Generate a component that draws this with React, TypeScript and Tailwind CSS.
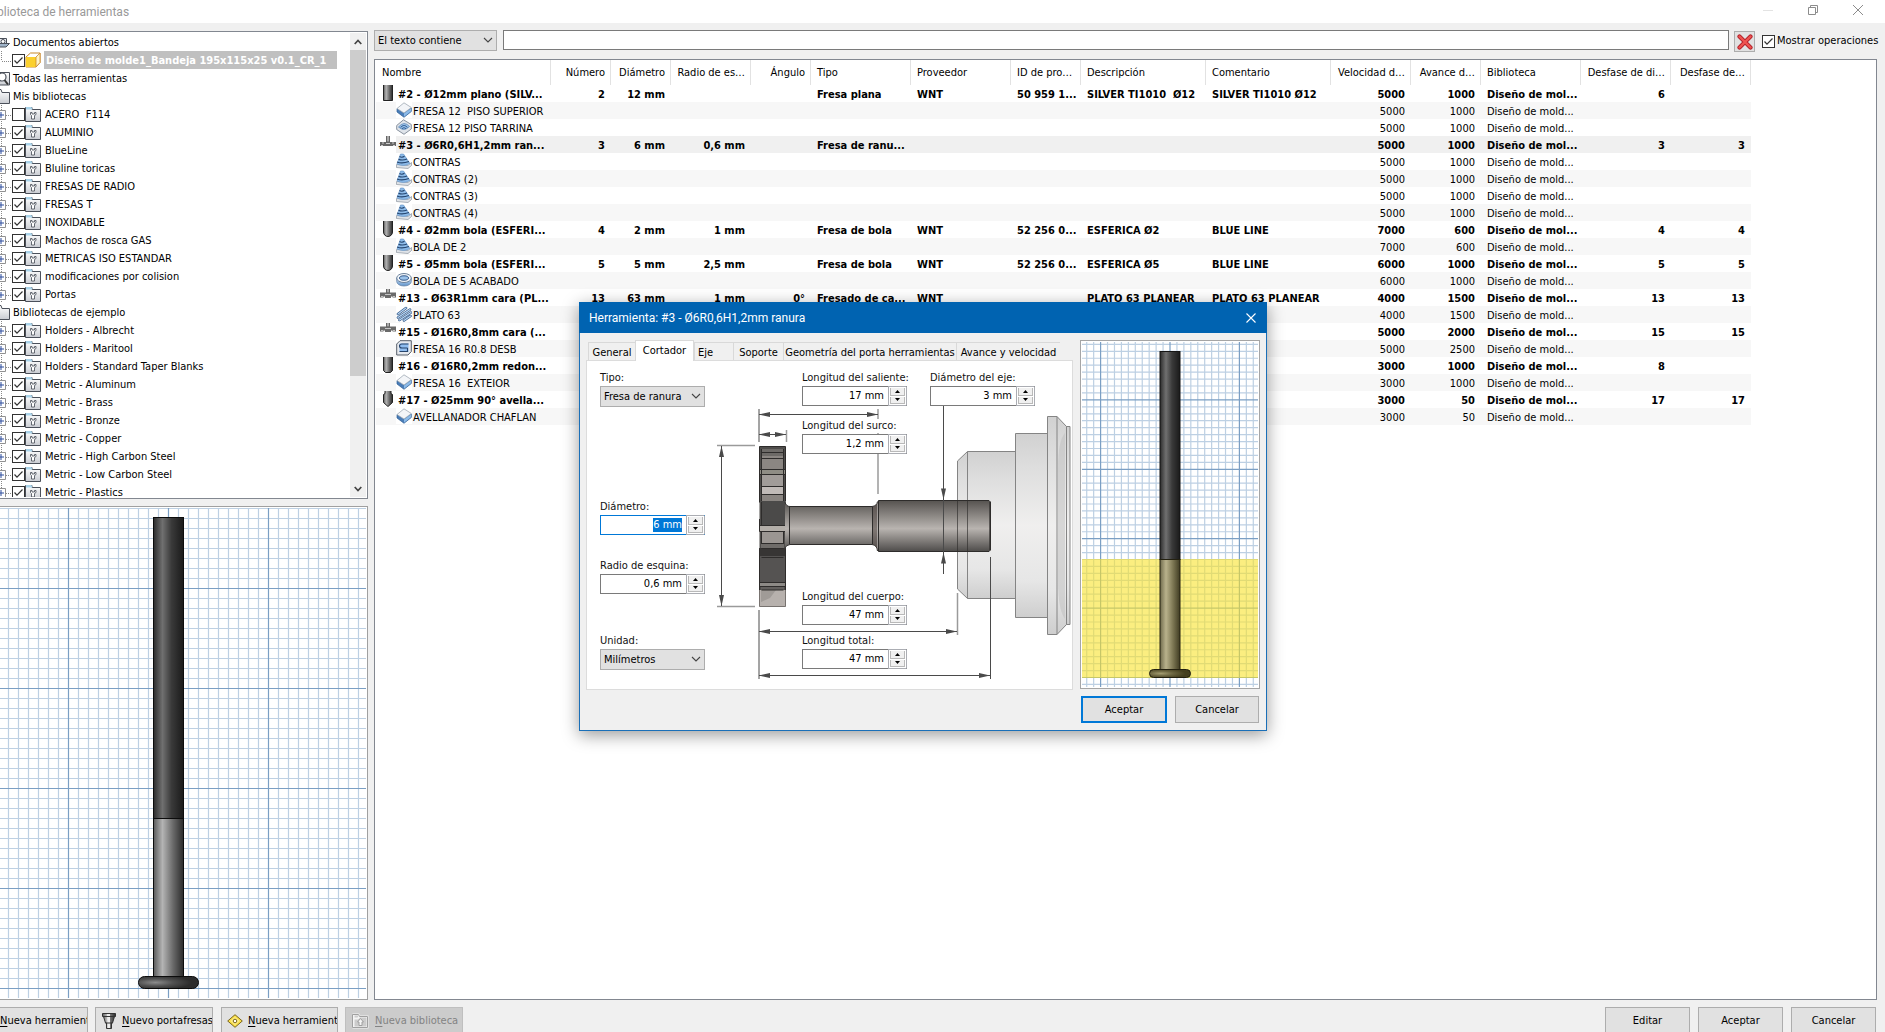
import { useEffect, useRef } from "react";
import type { ReactNode } from "react";

/* ---------- shared controls ---------- */

function CheckBox({ id, label, on = true }: { id: string; label?: string; on?: boolean }) {
  return (
    <span className="relative block h-[13px] w-[13px] shrink-0">
      <input id={id} type="checkbox" defaultChecked={on} aria-label={label}
        className="peer block h-[13px] w-[13px] appearance-none border border-[#333] bg-white" />
      <svg viewBox="0 0 13 13" className="pointer-events-none absolute inset-0 hidden h-[13px] w-[13px] peer-checked:block">
        <path d="M2.500 6.500 L5 9.200 L10.500 3.500" fill="none" stroke="#333" strokeWidth="1.200" />
      </svg>
    </span>
  );
}

function Select({ id, value, label }: { id: string; value: string; label?: string }) {
  return (
    <span className="relative block">
      <select id={id} aria-label={label} defaultValue={value}
        className="block h-[21px] w-full appearance-none border border-[#adadad] bg-[#e1e1e1] pt-px pr-4 pl-[3px] leading-[18px]">
        <option>{value}</option>
      </select>
      <svg viewBox="0 0 10 6" className="pointer-events-none absolute top-[7px] right-1 h-[6px] w-[10px]">
        <path d="M1 1 L5 5 L9 1" fill="none" stroke="#444" strokeWidth="1.100" />
      </svg>
    </span>
  );
}

function Spinner({ id, value, active }: { id: string; value: string; active?: boolean }) {
  const ref = useRef<HTMLInputElement>(null);
  useEffect(() => {
    if (active && ref.current) {
      ref.current.focus();
      ref.current.select();
    }
  }, [active]);
  return (
    <span className={active ? "flex h-5 items-center border border-[#0078d7] border-r-[#abadb3] bg-white" : "flex h-5 items-center border border-[#7a7a7a] border-r-[#abadb3] bg-white"}>
      <input ref={ref} id={id} defaultValue={value}
        className="h-[14px] w-0 min-w-0 flex-1 bg-transparent pr-1 text-right leading-[14px] outline-none selection:bg-[#0078d7] selection:text-white" />
      <span className="flex h-5 w-[18px] flex-col gap-px border border-r-0 border-[#abadb3] bg-white p-px">
        <button type="button" aria-label="Aumentar" className="grid flex-1 place-items-center border border-t-0 border-[#b9b9b9] bg-[#f0f0f0]">
          <svg viewBox="0 0 5 3" className="h-[3px] w-[5px]"><path d="M0 3 L2.500 0 L5 3 Z" /></svg>
        </button>
        <button type="button" aria-label="Disminuir" className="grid flex-1 place-items-center border border-t-0 border-[#b9b9b9] bg-[#f0f0f0]">
          <svg viewBox="0 0 5 3" className="h-[3px] w-[5px]"><path d="M0 0 L2.500 3 L5 0 Z" /></svg>
        </button>
      </span>
    </span>
  );
}

function Field({ id, label, children }: { id: string; label: string; children: ReactNode }) {
  return (
    <div className="flex flex-col gap-px">
      <label htmlFor={id} className="h-4 leading-[18px] whitespace-nowrap text-[#111]">{label}</label>
      {children}
    </div>
  );
}

/* ---------- gradients used by every drawing ---------- */

function Gradients() {
  return (
    <svg className="absolute h-0 w-0" aria-hidden="true">
      <defs>
        <linearGradient id="gDark"><stop offset="0" stopColor="#2c2c2c" /><stop offset="0.3" stopColor="#707070" /><stop offset="0.6" stopColor="#3a3a3a" /><stop offset="1" stopColor="#1a1a1a" /></linearGradient>
        <linearGradient id="gSteel"><stop offset="0" stopColor="#5a5a5a" /><stop offset="0.3" stopColor="#b4b4b4" /><stop offset="0.65" stopColor="#6a6a6a" /><stop offset="1" stopColor="#2b2b2b" /></linearGradient>
        <linearGradient id="gOlive"><stop offset="0" stopColor="#6f6a4c" /><stop offset="0.3" stopColor="#b9b28c" /><stop offset="0.65" stopColor="#7d7753" /><stop offset="1" stopColor="#3f3b22" /></linearGradient>
        <radialGradient id="gHead" cx="0.28" cy="0.5" r="0.6"><stop offset="0" stopColor="#8c8c8c" /><stop offset="0.5" stopColor="#515151" /><stop offset="1" stopColor="#2c2c2c" /></radialGradient>
        <radialGradient id="gHeadOlive" cx="0.28" cy="0.5" r="0.6"><stop offset="0" stopColor="#a39c70" /><stop offset="0.5" stopColor="#6b6540" /><stop offset="1" stopColor="#45401f" /></radialGradient>
        <linearGradient id="gBody" x2="0" y2="1"><stop offset="0" stopColor="#565350" /><stop offset="0.55" stopColor="#b9b4b0" /><stop offset="1" stopColor="#4e4c4a" /></linearGradient>
        <linearGradient id="gHolder" x2="0" y2="1"><stop offset="0" stopColor="#bdbdbd" /><stop offset="0.18" stopColor="#cfcfcf" /><stop offset="0.5" stopColor="#e9e8e7" /><stop offset="0.8" stopColor="#dcdcdc" /><stop offset="1" stopColor="#b9b9b9" /></linearGradient>
        <linearGradient id="gFolder" x2="0" y2="1"><stop offset="0" stopColor="#ffffff" /><stop offset="1" stopColor="#c9ccd2" /></linearGradient>
        <linearGradient id="gBlue" x2="0" y2="1"><stop offset="0" stopColor="#cfe1f5" /><stop offset="1" stopColor="#5f94cc" /></linearGradient>
      </defs>
    </svg>
  );
}

/* ---------- tree ---------- */

function LibraryIcon() {
  return (
    <svg viewBox="0 0 16 16" className="h-4 w-4 shrink-0">
      <path d="M.5 1.500 H7 V3.500 H15.500 V15.500 H.5 Z" fill="url(#gFolder)" stroke="#4b505a" />
      <path d="M1 1 H6.500 L7.500 3.500 H1 Z" fill="#a9d3ea" />
      <path d="M6.500 13 V9.500 L5.500 8.500 V6.500 H7 V8 H9.500 V6.500 H11 V8.500 L9.500 9.500 V13 Z" fill="#fff" stroke="#555a63" strokeWidth=".9" />
    </svg>
  );
}

function FolderIcon() {
  return (
    <svg viewBox="0 0 16 16" className="h-4 w-4 shrink-0">
      <path d="M.5 1.500 H7 L8 4.500 H15.500 V15.500 H.5 Z" fill="url(#gFolder)" stroke="#4b505a" />
    </svg>
  );
}

function TrayIcon() {
  return (
    <svg viewBox="0 0 16 16" className="h-4 w-4 shrink-0">
      <path d="M1 9 V4.500 H12.500 V9" fill="#e8ebf0" stroke="#4b505a" />
      <circle cx="9" cy="7.500" r="2" fill="#fff" stroke="#4b505a" />
      <path d="M0 9.500 H15.500 L12 13 H0 Z" fill="#9fb3c8" stroke="#4b505a" />
    </svg>
  );
}

function SearchAllIcon() {
  return (
    <svg viewBox="0 0 16 16" className="h-4 w-4 shrink-0">
      <path d="M.5 2.500 H15.500 V15 H.5 Z" fill="url(#gFolder)" stroke="#4b505a" />
      <circle cx="8" cy="7" r="4" fill="#fff" stroke="#4b505a" strokeWidth="1.200" />
      <path d="M10.500 10 L14 14.500" stroke="#333" strokeWidth="2" />
    </svg>
  );
}

function CubeIcon() {
  return (
    <svg viewBox="0 0 16 16" className="h-4 w-4 shrink-0">
      <path d="M1 5 L5.500 1 H15 V10.500 L11 15 H1 Z" fill="#fff" stroke="#c9892b" strokeLinejoin="round" />
      <path d="M1 5 H11 V15 H1 Z" fill="#fbd02d" />
      <path d="M11 5 L15 1 V10.500 L11 15 Z" fill="#fff4c6" stroke="#c9892b" strokeWidth=".8" />
    </svg>
  );
}

const myLibs = ["ACERO  F114", "ALUMINIO", "BlueLine", "Bluline toricas", "FRESAS DE RADIO", "FRESAS T", "INOXIDABLE", "Machos de rosca GAS", "METRICAS ISO ESTANDAR", "modificaciones por colision", "Portas"];
const sampleLibs = ["Holders - Albrecht", "Holders - Maritool", "Holders - Standard Taper Blanks", "Metric - Aluminum", "Metric - Brass", "Metric - Bronze", "Metric - Copper", "Metric - High Carbon Steel", "Metric - Low Carbon Steel", "Metric - Plastics"];

function RootNode({ icon, children }: { icon: ReactNode; children: string }) {
  return (
    <li className="flex h-[18px] items-center gap-[3px] whitespace-nowrap">{icon}<span className="h-[18px] leading-[20px]">{children}</span></li>
  );
}

function LibNode({ name, id }: { name: string; id: string }) {
  return (
    <li className="flex h-[18px] items-center whitespace-nowrap">
      <svg viewBox="0 0 18 18" className="h-[18px] w-[18px] shrink-0">
        <path d="M7.500 0 V18 M12 10.500 H18" stroke="#888" strokeDasharray="1 1" />
        <path d="M2.500 5.500 H11.500 V14.500 H2.500 Z" fill="#fff" stroke="#919191" />
        <path d="M4 10 H10 M7 7 V13" stroke="#2b4a9b" />
      </svg>
      <CheckBox id={id} label={name} on={!name.startsWith("ACERO")} />
      <LibraryIcon />
      <label htmlFor={id} className="h-[18px] pl-1 leading-[20px] whitespace-pre">{name}</label>
    </li>
  );
}

function Tree() {
  return (
    <div className="flex h-[468px] shrink-0 border border-[#828790] bg-white p-px">
      <ul className="min-w-0 flex-1 overflow-hidden">
        <RootNode icon={<TrayIcon />}>Documentos abiertos</RootNode>
        <li className="flex h-[18px] items-center whitespace-nowrap">
          <svg viewBox="0 0 18 18" className="h-[18px] w-[18px] shrink-0"><path d="M7.500 0 V10 M8 10.500 H18" fill="none" stroke="#888" strokeDasharray="1 1" /></svg>
          <CheckBox id="doc" label="Diseño de molde1" />
          <CubeIcon />
          <label htmlFor="doc" className="ml-[3px] h-[18px] w-[293px] bg-[#c0c0c0] pl-[2px] leading-[20px] font-bold text-white">Diseño de molde1_Bandeja 195x115x25 v0.1_CR_1</label>
        </li>
        <RootNode icon={<SearchAllIcon />}>Todas las herramientas</RootNode>
        <RootNode icon={<FolderIcon />}>Mis bibliotecas</RootNode>
        {myLibs.map((n, i) => <LibNode key={n} name={n} id={"my" + i} />)}
        <RootNode icon={<FolderIcon />}>Bibliotecas de ejemplo</RootNode>
        {sampleLibs.map((n, i) => <LibNode key={n} name={n} id={"sample" + i} />)}
      </ul>
      <div className="flex w-4 flex-col bg-[#f0f0f0]">
        <button type="button" aria-label="Subir" className="grid h-[17px] place-items-center">
          <svg viewBox="0 0 8 6" className="h-[6px] w-2"><path d="M.7 5 L4 1.500 L7.300 5" fill="none" stroke="#444" strokeWidth="1.700" /></svg>
        </button>
        <div className="h-[326px] bg-[#cdcdcd]" />
        <div className="flex-1" />
        <button type="button" aria-label="Bajar" className="grid h-[17px] place-items-center">
          <svg viewBox="0 0 8 6" className="h-[6px] w-2"><path d="M.7 1 L4 4.500 L7.300 1" fill="none" stroke="#444" strokeWidth="1.700" /></svg>
        </button>
      </div>
    </div>
  );
}

/* ---------- tool previews ---------- */

function Grid({ x0, x1, y0, y1, ox, oy, step }: { x0: number; x1: number; y0: number; y1: number; ox: number; oy: number; step: number }) {
  let minor = "";
  let major = "";
  for (let k = Math.ceil((x0 - ox) / step); ox + k * step < x1; k++) {
    const d = `M${ox + k * step} ${y0}V${y1}`;
    if (k % 10 === 0) major += d; else minor += d;
  }
  for (let k = Math.ceil((y0 - oy) / step); oy + k * step < y1; k++) {
    const d = `M${x0} ${oy + k * step}H${x1}`;
    if (k % 10 === 0) major += d; else minor += d;
  }
  return (
    <g fill="none">
      <path d={minor} stroke="#bdd0e3" strokeWidth="1.200" />
      <path d={major} stroke="#7b9fc4" strokeWidth="1.200" />
    </g>
  );
}

function LibraryPreview() {
  return (
    <div className="min-h-0 flex-1 border border-[#a0a0a0] bg-white">
      <svg viewBox="-7 507 374 492" preserveAspectRatio="xMaxYMax slice" className="block h-full w-full">
        <Grid x0={-7} x1={366} y0={508} y1={998} ox={168.5} oy={988.5} step={10} />
        <rect x="153.500" y="517.500" width="30" height="301" fill="url(#gDark)" stroke="#0c0c0c" />
        <rect x="153.500" y="818.500" width="30" height="158" fill="url(#gSteel)" stroke="#0c0c0c" />
        <rect x="138.500" y="976.500" width="60" height="12" rx="6" fill="url(#gHead)" stroke="#0c0c0c" />
      </svg>
    </div>
  );
}

function ToolPreview() {
  return (
    <div className="h-[349px] border border-[#a5a5a5] bg-white">
      <svg viewBox="1081 341 178 347" className="block h-full w-full">
        <Grid x0={1082} x1={1258} y0={342} y1={687} ox={1170} oy={677.5} step={6.94} />
        <rect x="1082" y="559" width="176" height="119" fill="#f8e32c" fillOpacity=".6" />
        <rect x="1160" y="351.500" width="20" height="208" fill="url(#gDark)" stroke="#151515" />
        <rect x="1160" y="559.500" width="20" height="110" fill="url(#gOlive)" stroke="#242110" />
        <rect x="1149.500" y="669.500" width="41" height="8" rx="4" fill="url(#gHeadOlive)" stroke="#242110" />
      </svg>
    </div>
  );
}

/* ---------- table ---------- */

type Icon = "flat" | "slot" | "ball" | "face" | "bull" | "chamfer" | "contour2d" | "pocket" | "cone" | "ring" | "parallel" | "facing";

function RowIcon({ kind }: { kind: Icon }) {
  return (
    <svg viewBox="0 0 16 16" className="h-4 w-4 shrink-0 bg-white">
      {kind === "flat" && <path d="M3.500 0 V15.500 H12.500 V0" fill="url(#gSteel)" stroke="#222" />}
      {kind === "bull" && <path d="M3.500 0 V13.500 L5.500 15.500 H10.500 L12.500 13.500 V0" fill="url(#gSteel)" stroke="#222" />}
      {kind === "ball" && <path d="M3.500 0 V11 A4.500 4.500 0 0 0 12.500 11 V0" fill="url(#gSteel)" stroke="#222" />}
      {kind === "chamfer" && <path d="M5 0 V2.500 L3.500 3.500 V11.500 L8 15.500 L12.500 11.500 V3.500 L11 2.500 V0" fill="url(#gSteel)" stroke="#222" />}
      {kind === "slot" && (
        <g>
          <path d="M6.500 0 V6 H9.500 V0" fill="#aaa" stroke="#666" />
          <path d="M0 6 H16 V10 H0 Z" fill="#666" />
          <path d="M2 7 H4 M6 7.500 H10 M12 7 H14 M1 9.500 H3 M13 9.500 H15" stroke="#ccc" />
        </g>
      )}
      {kind === "face" && (
        <g>
          <path d="M6.500 0 V4 H9.500 V0" fill="#aaa" stroke="#666" />
          <path d="M0 3.500 H16 V8.500 H12.500 V7.500 H11 V9 H5 V7.500 H3.500 V8.500 H0 Z" fill="#6b6b6b" />
          <path d="M5 5.500 H11 M1 7.500 H3 M13 7.500 H15" stroke="#c4c4c4" />
        </g>
      )}
      {kind === "contour2d" && (
        <g strokeLinejoin="round">
          <path d="M1 6.500 L8 11 L15.300 6 V9.500 L8 15.300 L1 10 Z" fill="#4a7db8" stroke="#2d5c92" strokeWidth=".7" />
          <path d="M1 6.500 L8 .8 L15.300 5.500 L8 11 Z" fill="#f3f5f8" stroke="#a0a9b4" strokeWidth=".8" />
          <path d="M8 11.500 L15 6.500 V9.300 L8 14.800 Z" fill="#8dbbe8" />
        </g>
      )}
      {kind === "pocket" && (
        <g strokeLinejoin="round">
          <path d="M.7 6.500 L7.500 .8 L15.300 5.500 V10 L8 15.300 L.7 10.500 Z" fill="#dfe4ea" stroke="#7d8794" strokeWidth=".9" />
          <path d="M2.500 8 Q8 1.500 13.500 7.500 Q8 13 2.500 8 Z" fill="#a9cdf0" stroke="#5682b3" strokeWidth=".8" />
          <path d="M4.500 8.500 Q8 4.500 11.500 8.500 M6 10 Q8 7.500 10 10" fill="none" stroke="#2f5f98" strokeWidth="1.100" />
        </g>
      )}
      {kind === "cone" && (
        <g>
          <path d="M.5 11.500 L12 12.500 L15.500 9.500 V12.500 L12 15.500 L.5 14.500 Z" fill="#dfe3e8" stroke="#8b939d" strokeWidth=".7" />
          <path d="M4.500 1 H7.500 L14 10.500 Q8 14 1 11 Z" fill="#8dbbe9" stroke="#5d8fc5" strokeWidth=".6" />
          <path d="M3.500 3.500 Q6 5 8.500 3.300 M2.500 6.200 Q6 8 11 6 M1 9 Q6 11 13 8.500" fill="none" stroke="#24456f" strokeWidth="1.100" />
        </g>
      )}
      {kind === "ring" && (
        <g>
          <path d="M.7 6 V9.500 A7.300 4.500 0 0 0 15.300 9.500 V6 Z" fill="url(#gBlue)" stroke="#6b87a8" strokeWidth=".8" />
          <ellipse cx="8" cy="6" rx="7.300" ry="4.500" fill="#f1f5fa" stroke="#5f7690" strokeWidth=".9" />
          <ellipse cx="8" cy="6" rx="4.500" ry="2.200" fill="#9cc3ea" stroke="#35598a" />
        </g>
      )}
      {kind === "parallel" && (
        <g fill="none" strokeLinecap="round">
          <path d="M2 8 L10 2 M2 11.500 L14 3.500 M3.500 14 L15 6.500 M8 14.500 L14.500 10" stroke="#2f5585" strokeWidth="2.600" />
          <path d="M2 8 L10 2 M2 11.500 L14 3.500 M3.500 14 L15 6.500 M8 14.500 L14.500 10" stroke="#b9d6f3" strokeWidth="1.300" />
        </g>
      )}
      {kind === "facing" && (
        <g strokeLinejoin="round">
          <path d="M.7 4 L4 .7 H15.300 V11.500 L12 15 H.7 Z" fill="#e6e9ee" stroke="#555d68" />
          <rect x="3.500" y="3.500" width="9" height="8.500" fill="#8fbdf0" />
          <path d="M12.500 4 H6 Q3.500 4 3.500 6 Q3.500 8 6 8 H11.500 M11.500 8 V11.500 H3.500" fill="none" stroke="#27446b" strokeWidth="1.100" />
        </g>
      )}
    </svg>
  );
}

type Row = { tool: boolean; icon: Icon; c: string[] };
const T = (icon: Icon, name: string, n: string, d: string, r: string, a: string, tipo: string, prov: string, id: string, desc: string, com: string, v: string, f: string, o1: string, o2: string): Row =>
  ({ tool: true, icon, c: [name, n, d, r, a, tipo, prov, id, desc, com, v, f, "Diseño de mol...", o1, o2] });
const O = (icon: Icon, name: string, v: string, f: string): Row =>
  ({ tool: false, icon, c: [name, "", "", "", "", "", "", "", "", "", v, f, "Diseño de mold...", "", ""] });

const rows: Row[] = [
  T("flat", "#2 - Ø12mm plano (SILV...", "2", "12 mm", "", "", "Fresa plana", "WNT", "50 959 1...", "SILVER TI1010  Ø12", "SILVER TI1010 Ø12", "5000", "1000", "6", ""),
  O("contour2d", "FRESA 12  PISO SUPERIOR", "5000", "1000"),
  O("pocket", "FRESA 12 PISO TARRINA", "5000", "1000"),
  T("slot", "#3 - Ø6R0,6H1,2mm ran...", "3", "6 mm", "0,6 mm", "", "Fresa de ranu...", "", "", "", "", "5000", "1000", "3", "3"),
  O("cone", "CONTRAS", "5000", "1000"),
  O("cone", "CONTRAS (2)", "5000", "1000"),
  O("cone", "CONTRAS (3)", "5000", "1000"),
  O("cone", "CONTRAS (4)", "5000", "1000"),
  T("ball", "#4 - Ø2mm bola (ESFERI...", "4", "2 mm", "1 mm", "", "Fresa de bola", "WNT", "52 256 0...", "ESFERICA Ø2", "BLUE LINE", "7000", "600", "4", "4"),
  O("cone", "BOLA DE 2", "7000", "600"),
  T("ball", "#5 - Ø5mm bola (ESFERI...", "5", "5 mm", "2,5 mm", "", "Fresa de bola", "WNT", "52 256 0...", "ESFERICA Ø5", "BLUE LINE", "6000", "1000", "5", "5"),
  O("ring", "BOLA DE 5 ACABADO", "6000", "1000"),
  T("face", "#13 - Ø63R1mm cara (PL...", "13", "63 mm", "1 mm", "0°", "Fresado de ca...", "WNT", "", "PLATO 63 PLANEAR", "PLATO 63 PLANEAR", "4000", "1500", "13", "13"),
  O("parallel", "PLATO 63", "4000", "1500"),
  T("face", "#15 - Ø16R0,8mm cara (...", "", "", "", "", "", "", "", "", "", "5000", "2000", "15", "15"),
  O("facing", "FRESA 16 R0.8 DESB", "5000", "2500"),
  T("bull", "#16 - Ø16R0,2mm redon...", "", "", "", "", "", "", "", "", "", "3000", "1000", "8", ""),
  O("contour2d", "FRESA 16  EXTEIOR", "3000", "1000"),
  T("chamfer", "#17 - Ø25mm 90° avella...", "", "", "", "", "", "", "", "", "", "3000", "50", "17", "17"),
  O("contour2d", "AVELLANADOR CHAFLAN", "3000", "50"),
];

const headers = ["Nombre", "Número", "Diámetro", "Radio de es…", "Ángulo", "Tipo", "Proveedor", "ID de pro…", "Descripción", "Comentario", "Velocidad d…", "Avance d…", "Biblioteca", "Desfase de di…", "Desfase de…"];
const rightAligned = [false, true, true, true, true, false, false, false, false, false, true, true, false, true, true];

function ToolTable() {
  return (
    <div className="min-h-0 flex-1 overflow-hidden border border-[#828790] bg-white pl-px">
      <table className="w-[1375px] table-fixed border-collapse">
        <colgroup>
          <col className="w-[175px]" /><col className="w-[60px]" /><col className="w-[60px]" /><col className="w-[80px]" /><col className="w-[60px]" />
          <col className="w-[100px]" /><col className="w-[100px]" /><col className="w-[70px]" /><col className="w-[125px]" /><col className="w-[125px]" />
          <col className="w-[80px]" /><col className="w-[70px]" /><col className="w-[100px]" /><col className="w-[90px]" /><col className="w-[80px]" />
        </colgroup>
        <thead>
          <tr className="h-[25px]">
            {headers.map((h, i) => (
              <th key={h} scope="col" className={rightAligned[i]
                ? "bg-[linear-gradient(#e2e2e2,#e2e2e2)] bg-[length:1px_100%] bg-right bg-no-repeat p-0 pt-[2px] pr-[6px] text-right font-normal whitespace-nowrap"
                : "bg-[linear-gradient(#e2e2e2,#e2e2e2)] bg-[length:1px_100%] bg-right bg-no-repeat p-0 pt-[2px] pl-[6px] text-left font-normal whitespace-nowrap"}>
                <span className={rightAligned[i] ? "flex justify-end" : "block"}>{h}</span>
              </th>
            ))}
          </tr>
        </thead>
        <tbody>
          {rows.map((r, i) => (
            <tr key={i} className={(r.tool ? "font-bold " : "") + (i === 3 ? "bg-[#f0f0f0]" : i % 2 ? "bg-[#f7f7f7]" : "bg-white")}>
              {r.c.map((t, j) => j === 0 ? (
                <td key={j} className="p-0">
                  <span className={r.tool ? "flex h-[17px] gap-[2px] leading-[19px] whitespace-pre" : "flex h-[17px] gap-px pl-5 leading-[19px] whitespace-pre"}>
                    {r.tool ? <span className="flex h-[17px] bg-white pl-1"><RowIcon kind={r.icon} /></span> : <RowIcon kind={r.icon} />}
                    {t}
                  </span>
                </td>
              ) : (
                <td key={j} className={rightAligned[j] ? "p-0 pr-[6px] text-right whitespace-pre" : "p-0 pl-[6px] whitespace-pre"}>
                  <span className="block h-[17px] leading-[19px]">{t}</span>
                </td>
              ))}
            </tr>
          ))}
        </tbody>
      </table>
    </div>
  );
}

/* ---------- tool dialog ---------- */

function hArrows(x1: number, x2: number, y: number) {
  return `M${x1} ${y}l11 -2.500v5ZM${x2} ${y}l-11 -2.500v5Z`;
}

function CutterDiagram() {
  const dark = "#2e2c2b";
  return (
    <svg viewBox="587 361 485 328" className="absolute inset-0 h-full w-full" aria-hidden="true">
      {/* cutter disc */}
      <rect x="759.500" y="446.500" width="26" height="160" fill="#4f4d4b" />
      <path d="M761 449h23v7h-23Z" fill="#6d6a67" />
      <path d="M761 456h23v13h-23Z" fill="#8b8682" />
      <path d="M759 469h27v5h-27Z" fill="#8f8d85" />
      <path d="M761 475h23v12h-23Z" fill="#a19c99" />
      <path d="M761 487h23v7h-23Z" fill="#c0bab7" />
      <path d="M761 494h23v7h-23Z" fill="#8a8581" />
      <path d="M761 501h24v25h-24Z" fill="#4b4a49" />
      <path d="M759 525.500h27v6h-27Z" fill="#b3aea8" />
      <path d="M761 532h23v11h-23Z" fill="#9b9692" />
      <path d="M761 543h23v5h-23Z" fill="#6f6c69" />
      <path d="M759 548h27v8h-27Z" fill="#373534" />
      <path d="M759 556h27v26h-27Z" fill="#555352" />
      <path d="M759 582h27v4h-27Z" fill="#8d8a86" />
      <path d="M761 586h23v4h-23Z" fill="#63605e" />
      <path d="M759 590h27v16h-27Z" fill="#b7b1ad" />
      <path d="M761 590h15l-6 8l-9 4Z" fill="#a09b97" />
      <path d="M759.500 446.500h26v55M759.500 446.500v56M761.500 449v52M783.500 449v52M761.500 452.500h22M761.500 458.500h22M759.500 469.500h26M759.500 474.500h26M761.500 486.500h22M761.500 494.500h22M761.500 502v24M759.500 519v7M759.500 525.500h26v6h-26ZM761.500 532v12M783.500 532v12M761.500 543.500h22M761.500 548.500h22M759.500 549v41M761.500 557.500h22M785.500 549v41M759.500 582.500h26M759.500 586.500h26M761.500 590h22" fill="none" stroke={dark} />
      <path d="M759.500 590v16.500h26V590" fill="none" stroke="#77726f" />
      {/* holder */}
      <g fill="url(#gHolder)" fillOpacity=".7" stroke="#848484">
        <path d="M957.500 461L967.500 451.500H1015.500V598.500H967.500L957.500 589Z" />
        <path d="M1015.500 433.500H1047.500V617.500H1015.500Z" />
        <path d="M1047.500 416.500H1057L1066.500 426.500V624.500L1057 634.500H1047.500Z" />
        <path d="M1066.500 426.500H1070V624.500H1066.500Z" />
        <path d="M967.500 451.500V598.500M1057 416.500V634.500" fill="none" />
      </g>
      <path d="M1065 433Q1058 440 1058 470V580Q1058 610 1065 619Z" fill="#bdbdbd" fillOpacity=".5" />
      {/* neck and shank */}
      <path d="M785 502Q786 506.500 790 506.500H872Q877 506 877.500 501.500V551Q877 545.500 872 544.500H790Q786 545 785 548Z" fill="url(#gBody)" />
      <path d="M785 502Q786 506.500 790 506.500H872Q877 506 877.500 501.500M785 548Q786 545 790 544.500H872Q877 545 877.500 551M789.500 507V544M872.500 507V544" fill="none" stroke={dark} />
      <path d="M873 507Q877 505 877.500 502V551Q877 546 873 544Z" fill="#5a504c" fillOpacity=".6" />
      <path d="M878.500 500.500H989L990.500 502V550L989 551.500H878.500Z" fill="url(#gBody)" stroke={dark} />
      <path d="M957.500 501V551M967.500 501V551M989.500 502V550" stroke={dark} strokeOpacity=".65" />
      {/* dimension lines */}
      <g fill="none">
        <path d="M878 409V419M878 433V494M786.500 430V442M957.500 593V635M717 445.500H755M717 606.500H755" stroke="#9a9a9a" strokeWidth="1.500" />
        <path d="M759 409V442M759 610V679M990.500 557V679M759 414.500H878M759 434.500H786M721.500 446V606M943.500 406V574M759 631.500H957M759 675.500H990" stroke="#4a4a4a" />
      </g>
      <g fill="#4a4a4a">
        <path d={hArrows(759, 878, 414.5) + hArrows(759, 786, 434.5) + hArrows(759, 957, 631.5) + hArrows(759, 990, 675.5)} />
        <path d="M721.500 446l-2.500 11h5ZM721.500 606l-2.500 -11h5ZM943.500 499.500l-2.500 -11h5ZM943.500 552.500l-2.500 11h5Z" />
      </g>
    </svg>
  );
}

function ToolDialog() {
  const tab = "h-[19px] shrink-0 border border-r-0 border-b-0 border-[#d9d9d9] bg-[#f0f0f0] leading-[20px] whitespace-nowrap";
  return (
    <section role="dialog" aria-label="Herramienta"
      className="absolute top-[302px] left-[579px] w-[688px] border border-[#1a6fb8] bg-[#f0f0f0] shadow-[0_4px_16px_rgba(0,0,0,0.4)]">
      <header className="-mx-px -mt-px flex h-[31px] items-center justify-between bg-[#0063b1] pr-[11px] pl-[10px]">
        <h2 className="font-[Roboto,sans-serif] text-xs text-white">Herramienta: #3 - Ø6R0,6H1,2mm ranura</h2>
        <button type="button" aria-label="Cerrar">
          <svg viewBox="0 0 10 10" className="h-[10px] w-[10px]"><path d="M.5 .5 L9.500 9.500 M9.500 .5 L.5 9.500" stroke="#fff" strokeWidth="1.100" /></svg>
        </button>
      </header>
      <div className="flex gap-[7px] px-[6px] py-[7px]">
        <div className="min-w-0 flex-1">
          <div role="tablist" className="flex h-[21px] items-end pl-[2px]">
            <button type="button" role="tab" className={tab + " w-[47px]"}>General</button>
            <button type="button" role="tab" aria-selected="true" className="relative z-10 h-[21px] w-[59px] shrink-0 border border-b-0 border-[#d9d9d9] bg-white pb-px leading-[19px]">Cortador</button>
            <button type="button" role="tab" className={tab + " w-[39px] pl-[3px] text-left"}>Eje</button>
            <button type="button" role="tab" className={tab + " w-[50px]"}>Soporte</button>
            <button type="button" role="tab" className={tab + " w-[173px]"}>Geometría del porta herramientas</button>
            <button type="button" role="tab" className={tab + " w-[104px] border-r"}>Avance y velocidad</button>
          </div>
          <div role="tabpanel" className="relative -mt-px h-[330px] border border-[#dcdcdc] bg-white pt-2 pl-[13px]">
            <CutterDiagram />
            <div className="relative flex">
              <div className="flex w-[105px] flex-col">
                <Field id="tipo" label="Tipo:"><Select id="tipo" value="Fresa de ranura" /></Field>
                <div className="mt-[91px]"><Field id="dia" label="Diámetro:"><Spinner id="dia" value="6 mm" active /></Field></div>
                <div className="mt-[22px]"><Field id="radio" label="Radio de esquina:"><Spinner id="radio" value="0,6 mm" /></Field></div>
                <div className="mt-[38px]"><Field id="unidad" label="Unidad:"><Select id="unidad" value="Milímetros" /></Field></div>
              </div>
              <div className="ml-[97px] flex w-[105px] flex-col">
                <Field id="saliente" label="Longitud del saliente:"><Spinner id="saliente" value="17 mm" /></Field>
                <div className="mt-[11px]"><Field id="surco" label="Longitud del surco:"><Spinner id="surco" value="1,2 mm" /></Field></div>
                <div className="mt-[134px]"><Field id="cuerpo" label="Longitud del cuerpo:"><Spinner id="cuerpo" value="47 mm" /></Field></div>
                <div className="mt-[7px]"><Field id="total" label="Longitud total:"><Spinner id="total" value="47 mm" /></Field></div>
              </div>
              <div className="ml-[23px] w-[105px]">
                <Field id="eje" label="Diámetro del eje:"><Spinner id="eje" value="3 mm" /></Field>
              </div>
            </div>
          </div>
        </div>
        <div className="flex w-[180px] shrink-0 flex-col gap-[7px]">
          <ToolPreview />
          <div className="flex gap-2 px-px">
            <button type="button" className="h-[27px] flex-1 border-2 border-[#0078d7] bg-[#e1e1e1] pt-[2px]">Aceptar</button>
            <button type="button" className="h-[27px] flex-1 border border-[#adadad] bg-[#e1e1e1] pt-[2px]">Cancelar</button>
          </div>
        </div>
      </div>
    </section>
  );
}

/* ---------- footer ---------- */

function FooterButton({ icon, rest, className, disabled }: { icon?: ReactNode; rest: string; className: string; disabled?: boolean }) {
  return (
    <button type="button" disabled={disabled}
      className={"flex h-7 shrink-0 items-center overflow-hidden border whitespace-nowrap " + (disabled ? "border-[#bfbfbf] bg-[#ccc] text-[#838383] " : "border-[#adadad] bg-[#e1e1e1] ") + className}>
      {icon}
      <span className="pt-px"><span className="underline underline-offset-2">N</span>{rest}</span>
    </button>
  );
}

function HolderIcon() {
  return (
    <svg viewBox="0 0 16 16" className="h-4 w-4 shrink-0">
      <path d="M1.500 .5 H14.500 V3.500 H13.500 L11.500 10 H10.500 V15.500 H5.500 V10 H4.500 L2.500 3.500 H1.500 Z" fill="url(#gSteel)" stroke="#333" />
      <path d="M6 1 H9 V15 H6.500 Z" fill="#eee" />
      <path d="M2 3.500 H14 M4.500 10 H11.500" stroke="#333" />
    </svg>
  );
}

function InsertIcon() {
  return (
    <svg viewBox="0 0 16 14" className="h-[14px] w-4 shrink-0">
      <path d="M.7 7 L8 .7 L15.300 7 L8 13.300 Z" fill="#fbe04a" stroke="#7a651a" strokeLinejoin="round" />
      <path d="M3.500 7 L8 3 L12.500 7 L8 11 Z" fill="#ffef8a" />
      <circle cx="8" cy="7" r="1.800" fill="#fff" stroke="#7a651a" />
    </svg>
  );
}

function NewLibraryIcon() {
  return (
    <svg viewBox="0 0 17 16" className="h-4 w-[17px] shrink-0" fill="none">
      <path d="M1.500 14.500 V1.500 H6.500 L7.500 3.500 H15.500 V14.500 Z M1.500 5.500 H6 M6 5.500 L7.500 3.500" stroke="#f4f4f4" strokeWidth="2" />
      <path d="M.5 14.500 V1.500 H6.500 L7.500 3.500 H15.500 V14.500 Z" stroke="#a0a0a0" />
      <path d="M7 12.500 V9 H5.500 L8.500 5.500 L11.500 9 H10 V12.500 Z" fill="#f4f4f4" stroke="#a0a0a0" />
    </svg>
  );
}

export default function App() {
  return (
    <div className="relative flex h-screen flex-col overflow-hidden bg-[#f0f0f0] font-['DejaVu_Sans_Condensed','DejaVu_Sans',sans-serif] text-[11px] text-black">
      <Gradients />
      <header className="flex h-[23px] shrink-0 items-center justify-between bg-white pr-[22px]">
        <h1 className="-ml-[3px] pt-px font-[Roboto,sans-serif] text-xs text-[#999]">blioteca de herramientas</h1>
        <div className="flex h-full items-center gap-[35px] pb-[3px] text-[#8c8c8c]">
          <button type="button" aria-label="Minimizar"><svg viewBox="0 0 10 10" className="h-[10px] w-[10px]"><path d="M0 5.500 H10" stroke="#e3e3e3" /></svg></button>
          <button type="button" aria-label="Restaurar"><svg viewBox="0 0 10 10" className="h-[10px] w-[10px]" fill="none" stroke="currentColor"><path d="M.5 2.500 H7.500 V9.500 H.5 Z M2.500 2.500 V.5 H9.500 V7.500 H7.500" /></svg></button>
          <button type="button" aria-label="Cerrar ventana"><svg viewBox="0 0 10 10" className="h-[10px] w-[10px]" stroke="currentColor"><path d="M0 0 L10 10 M10 0 L0 10" /></svg></button>
        </div>
      </header>

      <main className="flex min-h-0 flex-1 gap-[6px]">
        <aside className="-ml-2 flex w-[376px] shrink-0 flex-col gap-[7px] pt-2">
          <Tree />
          <LibraryPreview />
        </aside>
        <section className="flex min-w-0 flex-1 flex-col pr-2">
          <div className="mt-[7px] mb-[7px] flex h-[22px] items-start">
            <div className="w-[123px] shrink-0"><Select id="filtro" label="Filtro" value="El texto contiene" /></div>
            <input aria-label="Texto de búsqueda" className="ml-[6px] h-5 min-w-0 flex-1 border border-[#7a7a7a] bg-white px-1 outline-none" />
            <button type="button" aria-label="Borrar filtro" className="ml-[5px] grid h-[21px] w-[21px] shrink-0 place-items-center self-end border border-[#adadad] bg-[#e1e1e1]">
              <svg viewBox="0 0 16 16" className="h-4 w-4"><path d="M2.500 2.500 L13.500 13.500 M13.500 2.500 L2.500 13.500" stroke="#b3202a" strokeWidth="4.200" strokeLinecap="round" /><path d="M2.500 2.500 L13.500 13.500 M13.500 2.500 L2.500 13.500" stroke="#ef5350" strokeWidth="2.400" strokeLinecap="round" /></svg>
            </button>
            <div className="ml-[7px] flex w-[115px] shrink-0 items-center gap-[2px] self-center">
              <CheckBox id="ops" />
              <label htmlFor="ops" className="pt-px whitespace-nowrap">Mostrar operaciones</label>
            </div>
          </div>
          <ToolTable />
        </section>
      </main>

      <footer className="flex h-8 shrink-0 justify-between overflow-hidden pt-[7px] pr-[9px]">
        <div className="flex">
          <FooterButton rest="ueva herramienta" className="-ml-[30px] w-[118px] pl-[29px]" />
          <FooterButton icon={<HolderIcon />} rest="uevo portafresas" className="ml-[7px] w-[118px] gap-[5px] pl-[5px]" />
          <FooterButton icon={<InsertIcon />} rest="ueva herramienta" className="ml-2 w-[117px] gap-[5px] pl-[5px]" />
          <FooterButton icon={<NewLibraryIcon />} rest="ueva biblioteca" disabled className="ml-[7px] w-[118px] gap-[6px] pl-[6px]" />
        </div>
        <div className="flex gap-2">
          <button type="button" className="h-7 w-[85px] border border-[#adadad] bg-[#e1e1e1] pt-px">Editar</button>
          <button type="button" className="h-7 w-[85px] border border-[#adadad] bg-[#e1e1e1] pt-px">Aceptar</button>
          <button type="button" className="h-7 w-[85px] border border-[#adadad] bg-[#e1e1e1] pt-px">Cancelar</button>
        </div>
      </footer>

      <ToolDialog />
    </div>
  );
}
